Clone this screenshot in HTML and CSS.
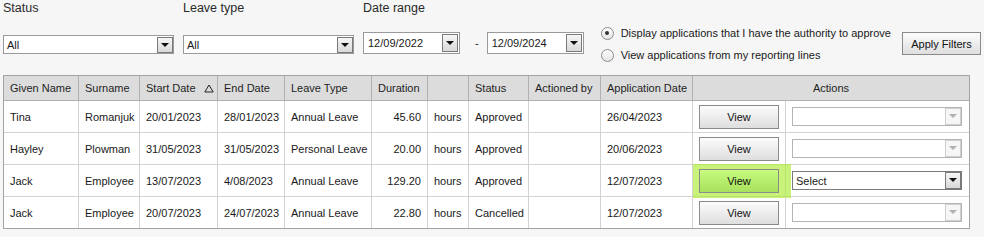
FILE: index.html
```html
<!DOCTYPE html>
<html>
<head>
<meta charset="utf-8">
<link rel="stylesheet" href="styles.css">
</head>
<body>
<div class="page">
  <div class="filters">
    <div class="field f-status">
      <div class="field-label">Status</div>
      <div class="select"><span class="val">All</span><span class="arrow"></span></div>
    </div>
    <div class="field f-leave">
      <div class="field-label">Leave type</div>
      <div class="select"><span class="val">All</span><span class="arrow"></span></div>
    </div>
    <div class="field f-date">
      <div class="field-label">Date range</div>
      <div class="daterow">
        <div class="select date"><span class="val">12/09/2022</span><span class="arrow"></span></div>
        <span class="dash">-</span>
        <div class="select date"><span class="val">12/09/2024</span><span class="arrow"></span></div>
      </div>
    </div>
    <div class="radios">
      <div class="radio"><span class="circle checked"></span><span>Display applications that I have the authority to approve</span></div>
      <div class="radio"><span class="circle"></span><span>View applications from my reporting lines</span></div>
    </div>
    <button class="btn apply">Apply Filters</button>
  </div>

  <table class="grid">
    <colgroup>
      <col style="width:75px"><col style="width:61px"><col style="width:78px"><col style="width:67px">
      <col style="width:87px"><col style="width:56px"><col style="width:41px"><col style="width:60px">
      <col style="width:72px"><col style="width:92px"><col style="width:93px"><col style="width:183px">
    </colgroup>
    <thead>
      <tr>
        <th>Given Name</th>
        <th>Surname</th>
        <th>Start Date<svg class="sort" width="10" height="9" viewBox="0 0 10 9"><path d="M5 1 L9.2 8 L0.8 8 Z" fill="none" stroke="#222" stroke-width="1"/></svg></th>
        <th>End Date</th>
        <th>Leave Type</th>
        <th>Duration</th>
        <th></th>
        <th>Status</th>
        <th>Actioned by</th>
        <th>Application Date</th>
        <th colspan="2" class="center last">Actions</th>
      </tr>
    </thead>
    <tbody>
      <tr>
        <td>Tina</td><td>Romanjuk</td><td>20/01/2023</td><td>28/01/2023</td><td>Annual Leave</td>
        <td class="num">45.60</td><td>hours</td><td>Approved</td><td></td><td>26/04/2023</td>
        <td class="act"><button class="btn view">View</button></td>
        <td class="last"><div class="aselect disabled"><span class="val"></span><span class="arrow"></span></div></td>
      </tr>
      <tr>
        <td>Hayley</td><td>Plowman</td><td>31/05/2023</td><td>31/05/2023</td><td>Personal Leave</td>
        <td class="num">20.00</td><td>hours</td><td>Approved</td><td></td><td>20/06/2023</td>
        <td class="act"><button class="btn view">View</button></td>
        <td class="last"><div class="aselect disabled"><span class="val"></span><span class="arrow"></span></div></td>
      </tr>
      <tr>
        <td>Jack</td><td>Employee</td><td>13/07/2023</td><td>4/08/2023</td><td>Annual Leave</td>
        <td class="num">129.20</td><td>hours</td><td>Approved</td><td></td><td>12/07/2023</td>
        <td class="act"><span class="glow"></span><button class="btn view active">View</button></td>
        <td class="last"><div class="aselect"><span class="val">Select</span><span class="arrow"></span></div></td>
      </tr>
      <tr class="lastrow">
        <td>Jack</td><td>Employee</td><td>20/07/2023</td><td>24/07/2023</td><td>Annual Leave</td>
        <td class="num">22.80</td><td>hours</td><td>Cancelled</td><td></td><td>12/07/2023</td>
        <td class="act"><button class="btn view">View</button></td>
        <td class="last"><div class="aselect disabled"><span class="val"></span><span class="arrow"></span></div></td>
      </tr>
    </tbody>
  </table>
</div>
</body>
</html>
```

FILE: styles.css
```css
* { box-sizing: border-box; }

body {
  margin: 0;
  background: #f6f6f6;
  font-family: "Liberation Sans", Arial, sans-serif;
  font-size: 11px;
  color: #1a1a1a;
}

.page {
  padding: 0 3px;
}

.filters {
  display: flex;
  align-items: flex-start;
  height: 75px;
}

.field-label {
  font-size: 12.5px;
  line-height: 16px;
  height: 16px;
  color: #2a2a2a;
}

.f-status,
.f-leave {
  width: 171px;
  margin-right: 9px;
}

.select {
  display: flex;
  align-items: center;
  height: 19px;
  margin-top: 19px;
  background: #fff;
  border: 1px solid #9a9a9a;
}

.select .val,
.aselect .val {
  flex: 1;
  padding-left: 3px;
  white-space: nowrap;
}

.arrow {
  position: relative;
  width: 16px;
  height: 16px;
  border: 1px solid #7a7a7a;
  background: linear-gradient(#f6f6f6, #d9d9d9);
}

.arrow::after {
  content: "";
  position: absolute;
  left: 3px;
  top: 5px;
  border-left: 4px solid transparent;
  border-right: 4px solid transparent;
  border-top: 4px solid #111;
}

.daterow {
  display: flex;
  align-items: center;
  margin-top: 16px;
}

.select.date {
  width: 97px;
  height: 22px;
  margin-top: 0;
}

.select.date .val {
  padding-left: 4px;
}

.select.date .arrow {
  height: 18px;
  margin-right: 1px;
}

.select.date .arrow::after {
  top: 6px;
}

.dash {
  margin: 0 8px 0 15px;
}

.radios {
  margin-left: 17px;
  padding-top: 25px;
}

.radio {
  display: flex;
  align-items: center;
  height: 16px;
  gap: 7px;
  color: #1a1a1a;
}

.radio + .radio {
  margin-top: 6px;
}

.circle {
  position: relative;
  width: 13px;
  height: 13px;
  border-radius: 50%;
  border: 1px solid #8a8a8a;
  background: linear-gradient(#ffffff, #e4e4e4);
}

.circle.checked::after {
  content: "";
  position: absolute;
  left: 3.5px;
  top: 3.5px;
  width: 4px;
  height: 4px;
  border-radius: 50%;
  background: #333;
}

.btn {
  font-family: "Liberation Sans", Arial, sans-serif;
  font-size: 11px;
  color: #111;
  border: 1px solid #8a8a8a;
  background: linear-gradient(#fcfcfc, #dedede);
  padding: 0;
  cursor: pointer;
}

.apply {
  margin-left: auto;
  margin-top: 32px;
  width: 79px;
  height: 23px;
}

.grid {
  border-collapse: separate;
  border-spacing: 0;
  table-layout: fixed;
  width: 967px;
  border: 1px solid #a3a3a3;
  background: #fff;
}

.grid th {
  height: 25px;
  padding: 0 6px;
  background: #dcdcdc;
  font-weight: normal;
  text-align: left;
  color: #1e1e1e;
  border-right: 1px solid #b0b0b0;
  border-bottom: 1px solid #b0b0b0;
  white-space: nowrap;
}

.grid th.center {
  text-align: center;
}

.grid th.last,
.grid td.last {
  border-right: none;
}

.sort {
  margin-left: 8px;
  vertical-align: -1px;
}

.grid td {
  height: 32px;
  padding: 0 6px;
  border-right: 1px solid #d2d2d2;
  border-bottom: 1px solid #d2d2d2;
  white-space: nowrap;
}

.grid tr.lastrow td {
  border-bottom: none;
  height: 31px;
}

.grid td.num {
  text-align: right;
}

.grid td.act {
  position: relative;
  text-align: center;
  padding: 0;
}

.view {
  position: relative;
  z-index: 1;
  width: 80px;
  height: 24px;
  vertical-align: middle;
}

.view.active {
  background: linear-gradient(#c6fb7e, #a8e15c);
}

.glow {
  position: absolute;
  left: 0;
  top: -1px;
  width: 98px;
  height: 34px;
  background: rgba(170, 235, 50, 0.65);
}

.aselect {
  display: flex;
  align-items: center;
  width: 170px;
  height: 19px;
  background: #fff;
  border: 1px solid #7a7a7a;
}

.aselect .arrow {
  width: 16px;
  height: 17px;
}

.aselect.disabled {
  border-color: #b4b4b4;
}

.aselect.disabled .arrow {
  border-color: #d0d0d0;
  background: #f6f6f6;
}

.aselect.disabled .arrow::after {
  border-top-color: #b0b0b0;
}
```
